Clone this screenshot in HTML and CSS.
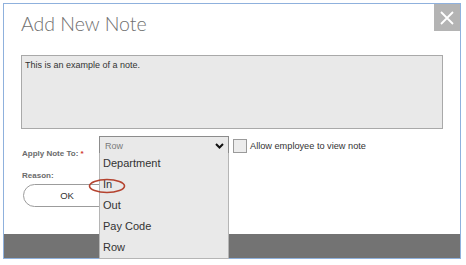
FILE: index.html
```html
<!DOCTYPE html>
<html>
<head>
	<meta charset="UTF-8">
	<title>Add New Note</title>
	<link rel="stylesheet" href="styles.css">
</head>
<body>
	<div class="dialog">
		<div class="head">
			<h1 class="title">Add New Note</h1>
			<button class="closeBtn">
				<svg width="16" height="16" viewBox="0 0 16 16"><path d="M2 2L14 14M14 2L2 14" stroke="#fff" stroke-width="1.8"/></svg>
			</button>
		</div>
		<div class="note">This is an example of a note.</div>
		<div class="form">
			<label class="lbl lbl1">Apply Note To: <span class="req">*</span></label>
			<div class="select">
				<span>Row</span>
				<svg width="9" height="6" viewBox="0 0 9 6"><path d="M1 1L4.5 4.5L8 1" fill="none" stroke="#111" stroke-width="2"/></svg>
			</div>
			<div class="allow"><span class="check"></span>Allow employee to view note</div>
			<label class="lbl lbl2">Reason:</label>
		</div>
		<button class="okBtn">OK</button>
		<div class="foot"></div>
	</div>
	<ul class="options">
		<li>Department</li>
		<li>In</li>
		<li>Out</li>
		<li>Pay Code</li>
		<li>Row</li>
	</ul>
	<svg class="mark" width="38" height="16" viewBox="0 0 38 16"><ellipse cx="19" cy="8" rx="17.5" ry="6.5" fill="none" stroke="#b5432f" stroke-width="1.6"/></svg>
</body>
</html>
```

FILE: styles.css
```css
body {margin: 0;background: #fff;font-family: "Liberation Sans", Arial, sans-serif;position: relative;width: 466px;height: 265px;overflow: hidden;}
.dialog {margin: 3px 0 0 3px;width: 456px;height: 254px;border: 1px solid #8fb1dd;display: flex;flex-direction: column;position: relative;}
.head {height: 51px;position: relative;}
.title {margin: 0;padding: 7px 0 0 17px;font-family: Lato, "Open Sans", sans-serif;font-weight: 300;font-size: 19.5px;line-height: 26px;color: #6f6f6f;}
.closeBtn {position: absolute;top: 0;right: 0;width: 26px;height: 27px;border: 0;padding: 0;background: #b4b4b4;display: flex;align-items: center;justify-content: center;}
.note {margin: 0 17px;height: 66px;background: #e9e9e9;border: 1px solid #a9a9a9;padding: 3px 3px;font-size: 9px;line-height: 12px;color: #333;}
.form {display: grid;grid-template-columns: 77px 130px auto;grid-template-rows: 19px 17px;row-gap: 10px;margin: 7px 0 0 18px;}
.lbl {font-size: 8px;font-weight: bold;color: #6b6b6b;}
.lbl1 {align-self: end;margin-bottom: -3px;}
.lbl2 {grid-column: 1;align-self: center;margin-top: 3px;}
.req {color: #d0342c;}
.select {box-sizing: border-box;border: 1px solid #8c8c8c;background: #e9e9e9;display: flex;align-items: center;justify-content: space-between;padding: 0 4px 0 5px;font-size: 9px;color: #7a7a7a;}
.allow {display: flex;align-items: center;padding-left: 4px;font-size: 9.2px;color: #333;}
.check {width: 12px;height: 12px;border: 1px solid #9a9a9a;background: #ececec;margin-right: 3px;}
.okBtn {margin: 2px 0 0 19px;width: 88px;height: 23px;border: 1px solid #9c9c9c;border-radius: 12px;background: #fff;font-family: "Liberation Sans", Arial, sans-serif;font-size: 9.5px;color: #333;}
.foot {margin-top: auto;height: 24px;background: #737373;}
.options {position: absolute;left: 99px;top: 153px;width: 130px;height: 106px;box-sizing: border-box;margin: 0;padding: 0;list-style: none;background: #e9e9e9;border: 1px solid #b5b5b5;border-top: 0;}
.options li {height: 21px;line-height: 21px;padding-left: 3px;font-size: 11px;color: #333;}
.mark {position: absolute;left: 88px;top: 178px;}
```
